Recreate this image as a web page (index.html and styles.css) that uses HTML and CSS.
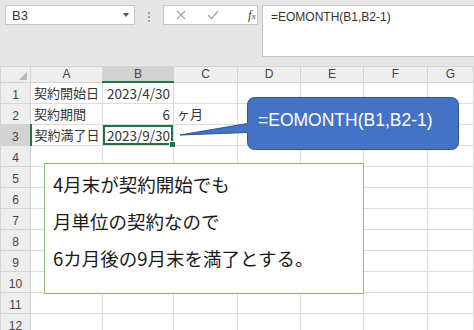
FILE: index.html
```html
<!DOCTYPE html>
<html lang="ja">
<head>
    <meta charset="UTF-8">
    <meta name="viewport" content="width=device-width, initial-scale=1.0">
    <title>EOMONTH</title>
    <link rel="stylesheet" href="styles.css">
</head>
<body>
    <div class="bar">
        <div class="namebox"><span>B3</span><span class="caret"></span></div>
        <div class="grip"><i></i><i></i><i></i></div>
        <div class="fxbox">
            <svg width="10" height="10" viewBox="0 0 10 10"><path d="M1 1 L9 9 M9 1 L1 9" stroke="#a8a8a8" stroke-width="1.2" fill="none"/></svg>
            <svg width="12" height="10" viewBox="0 0 12 10"><path d="M1 5 L4.5 8.5 L11 1" stroke="#a8a8a8" stroke-width="1.2" fill="none"/></svg>
            <span class="fx">f<sub>x</sub></span>
        </div>
        <div class="formula">=EOMONTH(B1,B2-1)</div>
    </div>

    <table class="sheet">
        <colgroup>
            <col class="w-head"><col class="w-a"><col class="w-b"><col class="w-c"><col class="w-d"><col class="w-e"><col class="w-f"><col class="w-g">
        </colgroup>
        <tr class="hdr"><th class="corner"><span class="tri"></span></th><th>A</th><th class="on">B</th><th>C</th><th>D</th><th>E</th><th>F</th><th>G</th></tr>
        <tr><th>1</th><td>契約開始日</td><td class="num">2023/4/30</td><td></td><td></td><td></td><td></td><td></td></tr>
        <tr><th>2</th><td>契約期間</td><td class="num">6</td><td>ヶ月</td><td></td><td></td><td></td><td></td></tr>
        <tr><th class="on">3</th><td>契約満了日</td><td class="num sel">2023/9/30<span class="handle"></span></td><td></td><td></td><td></td><td></td><td></td></tr>
        <tr><th>4</th><td></td><td></td><td></td><td></td><td></td><td></td><td></td></tr>
        <tr><th>5</th><td></td><td></td><td></td><td></td><td></td><td></td><td></td></tr>
        <tr><th>6</th><td></td><td></td><td></td><td></td><td></td><td></td><td></td></tr>
        <tr><th>7</th><td></td><td></td><td></td><td></td><td></td><td></td><td></td></tr>
        <tr><th>8</th><td></td><td></td><td></td><td></td><td></td><td></td><td></td></tr>
        <tr><th>9</th><td></td><td></td><td></td><td></td><td></td><td></td><td></td></tr>
        <tr><th>10</th><td></td><td></td><td></td><td></td><td></td><td></td><td></td></tr>
        <tr><th>11</th><td></td><td></td><td></td><td></td><td></td><td></td><td></td></tr>
        <tr><th>12</th><td></td><td></td><td></td><td></td><td></td><td></td><td></td></tr>
    </table>

    <!-- 吹き出し -->
    <div class="callout">
        <svg class="callout-shape" width="282" height="55" viewBox="0 0 282 55">
            <path d="M77.5 1.5 H272.5 Q280.5 1.5 280.5 9.5 V45.5 Q280.5 53.5 272.5 53.5 H77.5 Q69.5 53.5 69.5 45.5 V36.5 L2 39 L69.5 27.5 V9.5 Q69.5 1.5 77.5 1.5 Z" fill="#4472c4" stroke="#2f528f" stroke-width="1"/>
        </svg>
        <span class="callout-text">=EOMONTH(B1,B2-1)</span>
    </div>

    <!-- テキストボックス -->
    <div class="note">
        <p>4月末が契約開始でも</p>
        <p>月単位の契約なので</p>
        <p>6カ月後の9月末を満了とする。</p>
    </div>
</body>
</html>
```

FILE: styles.css
```css
body { margin: 0; width: 474px; height: 330px; overflow: hidden; position: relative; background: #e6e6e6; font-family: "Liberation Sans", "Noto Sans CJK JP", sans-serif; }

.bar { display: flex; align-items: flex-start; height: 66px; padding: 5px 0 0 5px; box-sizing: border-box; }
.namebox { width: 130px; height: 20px; box-sizing: border-box; background: #fff; border: 1px solid #c6c6c6; display: flex; align-items: center; justify-content: space-between; padding: 0 5px 0 6px; font-size: 13px; color: #333; }
.caret { width: 0; height: 0; border-left: 3px solid transparent; border-right: 3px solid transparent; border-top: 4px solid #555; }
.grip { width: 28px; display: flex; flex-direction: column; align-items: center; gap: 2px; padding-top: 7px; }
.grip i { width: 2px; height: 2px; background: #a0a0a0; }
.fxbox { width: 95px; height: 20px; box-sizing: border-box; background: #fff; border: 1px solid #c6c6c6; margin-right: 4px; display: flex; align-items: center; padding-left: 12px; gap: 21px; }
.fx { font-family: "Liberation Serif", serif; font-style: italic; font-size: 13px; color: #444; margin-left: 8px; }
.fx sub { font-size: 9px; vertical-align: 0; }
.formula { flex: 1; height: 52px; box-sizing: border-box; background: #fff; border: 1px solid #c6c6c6; border-right: none; padding: 3px 8px; font-size: 12px; line-height: 16px; color: #333; }

.sheet { border-collapse: collapse; table-layout: fixed; width: 474px; background: #fff; font-family: "Noto Sans CJK JP", sans-serif; }
.w-head { width: 30px; }
.w-a { width: 72px; }
.w-b { width: 71px; }
.w-c { width: 64px; }
.w-d { width: 63px; }
.w-e { width: 63px; }
.w-f { width: 64px; }
.sheet tr { height: 21px; }
.sheet tr.hdr { height: 15px; }
.sheet td { border: 1px solid #dcdcdc; padding: 0 3px; font-size: 13px; line-height: 18px; color: #333; white-space: nowrap; overflow: hidden; }
.sheet td.num { text-align: right; font-size: 13.5px; }
.sheet th { background: #eeeeee; border: 1px solid #d4d4d4; font-weight: normal; font-family: "Liberation Sans", sans-serif; font-size: 12px; color: #444; padding: 0; line-height: 14px; }
.sheet tr:not(.hdr) th { vertical-align: bottom; padding-bottom: 1px; }
.sheet tr.hdr th.on { background: #d2d2d2; border-bottom: 2px solid #217346; }
.sheet tr:not(.hdr) th.on { background: #d2d2d2; border-right: 2px solid #217346; }
.corner { position: relative; }
.tri { position: absolute; right: 3px; bottom: 2px; width: 0; height: 0; border-left: 8px solid transparent; border-bottom: 8px solid #b8b8b8; }
.sheet td.sel { position: relative; box-shadow: inset 0 0 0 2px #217346; overflow: visible; }
.handle { position: absolute; right: -3px; bottom: -3px; width: 5px; height: 5px; background: #217346; border: 1px solid #fff; }

.callout { position: absolute; left: 178px; top: 96px; width: 282px; height: 55px; display: flex; align-items: center; }
.callout-shape { position: absolute; left: 0; top: 0; }
.callout-text { position: relative; margin: 0 0 6px 80px; color: #fff; font-family: "Liberation Sans", sans-serif; font-size: 17.5px; }

.note { position: absolute; left: 44px; top: 163px; width: 320px; height: 131px; box-sizing: border-box; background: #fff; border: 1px solid #8cbd6c; padding: 2px 8px; font-family: "Noto Sans CJK JP", sans-serif; font-size: 18.5px; color: #1a1a1a; }
.note p { margin: 0; line-height: 37px; }
```
